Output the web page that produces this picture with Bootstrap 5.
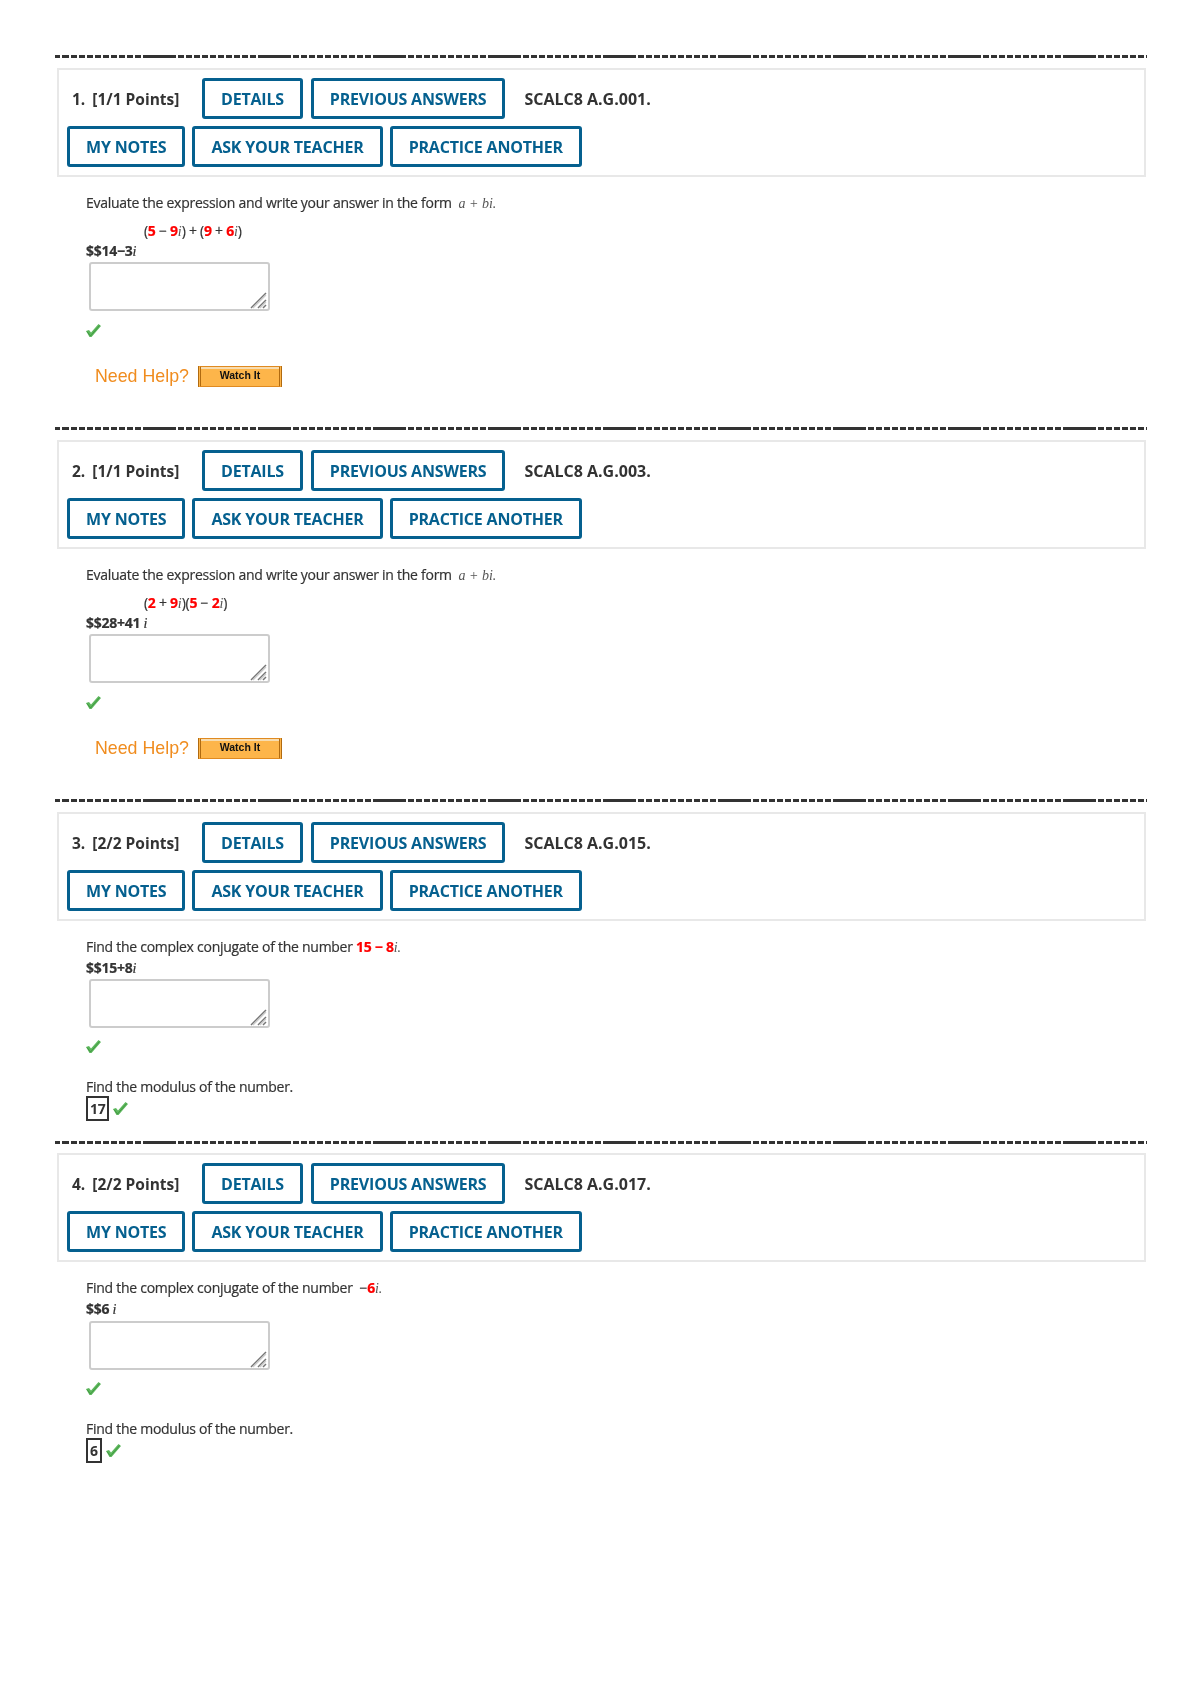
<!doctype html>
<html lang="en"><head><meta charset="utf-8"><title>Questions</title>
<link rel="stylesheet" href="https://cdn.jsdelivr.net/npm/bootstrap@5.3.0/dist/css/bootstrap.min.css">
<style>
body{background:#fff;color:#333;font-family:"Open Sans","Liberation Sans",sans-serif;font-size:14px;letter-spacing:-.27px;height:1698px;overflow:hidden}
.sheet{padding:55px 54px 0 55px;filter:blur(.55px)}
.dashline{height:3px;margin:0 -1px 10px 0;background:repeating-linear-gradient(90deg,#333 0 6px,transparent 6px 8px,#333 8px 14px,transparent 14px 16px,#333 16px 22px,transparent 22px 24px,#333 24px 30px,transparent 30px 32px,#333 32px 38px,transparent 38px 40px,#333 40px 46px,transparent 46px 48px,#333 48px 54px,transparent 54px 56px,#333 56px 62px,transparent 62px 64px,#333 64px 70px,transparent 70px 72px,#333 72px 78px,transparent 78px 80px,#333 80px 113px,transparent 113px 115px);background-position:8px 0}
.dash-tight{margin-bottom:9px}
.qhead{border:2px solid #e8e8e8;height:109px;padding:8px 0 0 8px;margin-left:2px}
.hrow{height:41px;margin-bottom:7px}
.btnset{gap:7px}
.pts{font-weight:700;font-size:15.500px;width:135px;padding:2px 0 0 5px;letter-spacing:0;color:#333}
.pts span{margin-right:7px}
.qbtn{border:3px solid #05608f;border-radius:3px;color:#05608f;background:#fff;font-weight:700;font-size:16px;letter-spacing:-.2px;height:41px;padding:0 16px;display:flex;align-items:center;text-transform:uppercase;text-decoration:none}
.ref{font-weight:700;font-size:16px;letter-spacing:0;margin-left:11px;color:#333}
.qbody{padding:16px 0 0 31px}
.ln{line-height:20px;-webkit-text-stroke:.2px #333}
.mathline{padding-left:58px;margin:7px 0 -1px}
.ans{font-weight:700}
.ans i{font-weight:400;font-family:"Liberation Serif",serif}
.red{color:#f00;font-weight:700;-webkit-text-stroke:.2px #f00}
.m{font-family:"Liberation Serif",serif;font-style:italic;font-size:14px;letter-spacing:0;color:#555;-webkit-text-stroke:0}
.boxwrap{width:181px;height:49px;margin:0 0 0 3px;position:relative}
.box-low{margin-top:1px}
.boxwrap textarea{width:100%;height:100%;resize:none;border:2px solid #ccc;border-radius:3px;background:#fff;display:block;padding:0}
.grip{position:absolute;right:2px;bottom:2px}
.tick{display:block;margin-top:11px}
.tick-h{margin-top:12px}
.helprow{margin:25px 0 0 9px}
.needhelp{font-family:"Liberation Sans",sans-serif;color:#f08c1e;font-size:17.800px;letter-spacing:0;margin-right:9px}
.watch{width:84px;height:21px;background:#fdb54a;border:1px solid #e08a20;border-left:3px double #b06a10;border-right:3px double #b06a10;color:#111;font-family:"Liberation Sans",sans-serif;font-size:10.500px;font-weight:700;letter-spacing:0;display:flex;align-items:center;justify-content:center;box-shadow:inset 0 2px 0 #f7dcb0}
.valbox{border:2px solid #333;font-weight:700;height:25px;padding:0 2px;display:inline-flex;align-items:center;font-size:14px;line-height:1}
.modq{margin-top:23px;line-height:19px}
</style></head><body>
<svg width="0" height="0" class="d-block"><defs>
<symbol id="chk" viewBox="0 0 15 15"><path d="M0 8l3-1 2 2.500L12.500 1 15 3 5.500 14 3.500 14z" fill="#5cb85c"/><path d="M1 8.500l3.500 4.500 9-10.500" fill="none" stroke="#3c8f3c" stroke-width=".8"/></symbol>
<symbol id="grp" viewBox="0 0 18 18"><path d="M1 17L16 2M8 17l8-8M13 17l3-3" stroke="#777" stroke-width="1.500" fill="none"/><path d="M3 17L16 4M10 17l6-6" stroke="#ccc" stroke-width="1.200" fill="none"/></symbol>
</defs></svg>
<div class="sheet">

<section style="height:372px"><div class="dashline"></div>
<div class="qhead">
<div class="hrow d-flex align-items-center"><div class="pts flex-shrink-0"><span>1.</span>[1/1 Points]</div><div class="d-flex gap-2 align-items-center"><a class="qbtn">Details</a><a class="qbtn">Previous Answers</a><span class="ref">SCALC8 A.G.001.</span></div></div>
<div class="hrow d-flex btnset"><a class="qbtn">My Notes</a><a class="qbtn">Ask Your Teacher</a><a class="qbtn">Practice Another</a></div>
</div>
<div class="qbody">
<div class="ln">Evaluate the expression and write your answer in the form &nbsp;<span class="m">a + bi.</span></div>
<div class="ln mathline">(<span class="red">5</span> − <span class="red">9</span><span class="m">i</span>) + (<span class="red">9</span> + <span class="red">6</span><span class="m">i</span>)</div>
<div class="ln ans">$$14−3<i>i</i></div>
<div class="boxwrap"><textarea aria-label="answer"></textarea><svg class="grip" width="18" height="18"><use href="#grp"/></svg></div>
<svg class="tick tick-h" width="15" height="15"><use href="#chk"/></svg>
<div class="helprow d-flex align-items-center"><span class="needhelp">Need Help?</span><span class="watch">Watch It</span></div>
</div></section>

<section style="height:372px"><div class="dashline"></div>
<div class="qhead">
<div class="hrow d-flex align-items-center"><div class="pts flex-shrink-0"><span>2.</span>[1/1 Points]</div><div class="d-flex gap-2 align-items-center"><a class="qbtn">Details</a><a class="qbtn">Previous Answers</a><span class="ref">SCALC8 A.G.003.</span></div></div>
<div class="hrow d-flex btnset"><a class="qbtn">My Notes</a><a class="qbtn">Ask Your Teacher</a><a class="qbtn">Practice Another</a></div>
</div>
<div class="qbody">
<div class="ln">Evaluate the expression and write your answer in the form &nbsp;<span class="m">a + bi.</span></div>
<div class="ln mathline">(<span class="red">2</span> + <span class="red">9</span><span class="m">i</span>)(<span class="red">5</span> − <span class="red">2</span><span class="m">i</span>)</div>
<div class="ln ans">$$28+41<i> i</i></div>
<div class="boxwrap"><textarea aria-label="answer"></textarea><svg class="grip" width="18" height="18"><use href="#grp"/></svg></div>
<svg class="tick tick-h" width="15" height="15"><use href="#chk"/></svg>
<div class="helprow d-flex align-items-center"><span class="needhelp">Need Help?</span><span class="watch">Watch It</span></div>
</div></section>

<section style="height:342px"><div class="dashline"></div>
<div class="qhead">
<div class="hrow d-flex align-items-center"><div class="pts flex-shrink-0"><span>3.</span>[2/2 Points]</div><div class="d-flex gap-2 align-items-center"><a class="qbtn">Details</a><a class="qbtn">Previous Answers</a><span class="ref">SCALC8 A.G.015.</span></div></div>
<div class="hrow d-flex btnset"><a class="qbtn">My Notes</a><a class="qbtn">Ask Your Teacher</a><a class="qbtn">Practice Another</a></div>
</div>
<div class="qbody">
<div class="ln">Find the complex conjugate of the number <span class="red">15 − 8</span><span class="m">i.</span></div>
<div class="ln ans">$$15+8<i>i</i></div>
<div class="boxwrap"><textarea aria-label="answer"></textarea><svg class="grip" width="18" height="18"><use href="#grp"/></svg></div>
<svg class="tick" width="15" height="15"><use href="#chk"/></svg>
<div class="ln modq">Find the modulus of the number.</div>
<div class="d-flex align-items-center gap-1"><span class="valbox">17</span><svg width="15" height="15"><use href="#chk"/></svg></div>
</div></section>

<section><div class="dashline dash-tight"></div>
<div class="qhead">
<div class="hrow d-flex align-items-center"><div class="pts flex-shrink-0"><span>4.</span>[2/2 Points]</div><div class="d-flex gap-2 align-items-center"><a class="qbtn">Details</a><a class="qbtn">Previous Answers</a><span class="ref">SCALC8 A.G.017.</span></div></div>
<div class="hrow d-flex btnset"><a class="qbtn">My Notes</a><a class="qbtn">Ask Your Teacher</a><a class="qbtn">Practice Another</a></div>
</div>
<div class="qbody">
<div class="ln">Find the complex conjugate of the number &nbsp;−<span class="red">6</span><span class="m">i.</span></div>
<div class="ln ans">$$6<i> i</i></div>
<div class="boxwrap box-low"><textarea aria-label="answer"></textarea><svg class="grip" width="18" height="18"><use href="#grp"/></svg></div>
<svg class="tick" width="15" height="15"><use href="#chk"/></svg>
<div class="ln modq">Find the modulus of the number.</div>
<div class="d-flex align-items-center gap-1"><span class="valbox">6</span><svg width="15" height="15"><use href="#chk"/></svg></div>
</div></section>

</div>
</body></html>
